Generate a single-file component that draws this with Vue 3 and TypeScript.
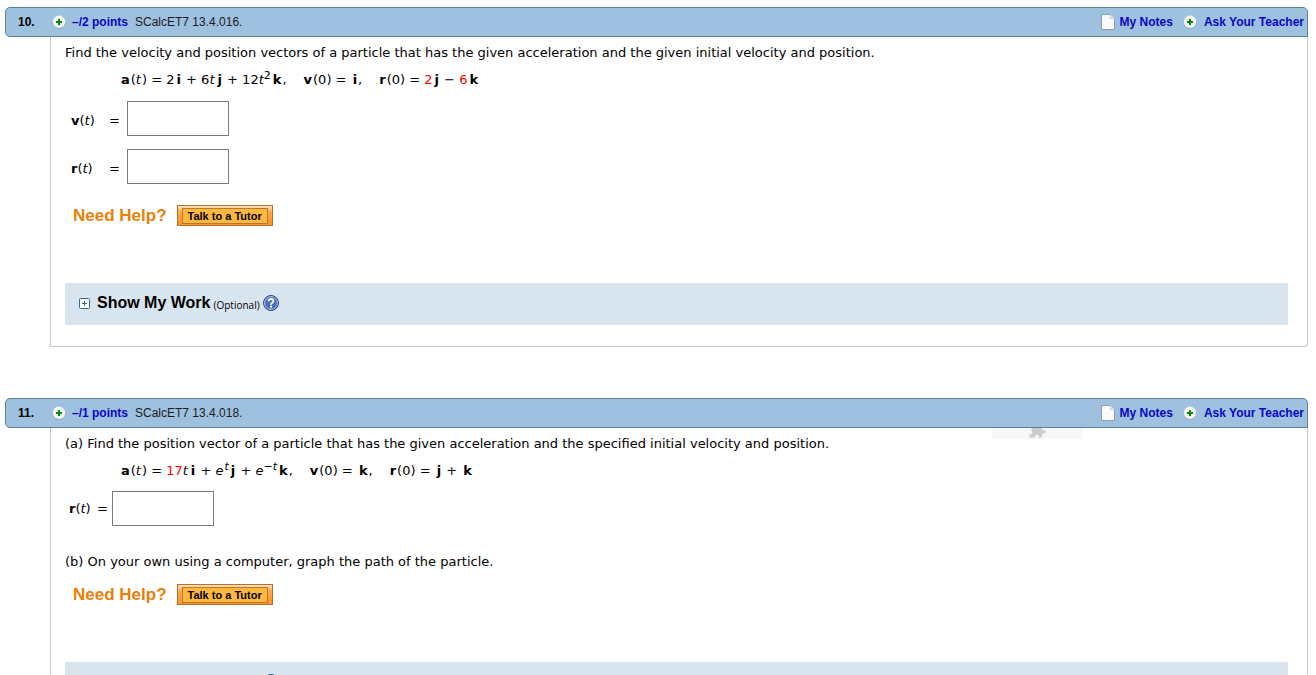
<script setup lang="ts">
import { reactive } from 'vue'

type Kind = 'text' | 'vec' | 'var' | 'num' | 'sup' | 'supvar' | 'gap'
interface Token { s: string; k: Kind }
interface Field { id: string; name: string }
interface Question {
  no: number
  points: string
  source: string
  intro: string
  formula: Token[]
  fields: Field[]
  wide: boolean
  outro?: string
  plugin: boolean
}

const T = (s: string, k: Kind = 'text'): Token => ({ s, k })

const questions: Question[] = [
  {
    no: 10,
    points: '–/2 points',
    source: 'SCalcET7 13.4.016.',
    intro: 'Find the velocity and position vectors of a particle that has the given acceleration and the given initial velocity and position.',
    formula: [
      T('a', 'vec'), T('('), T('t', 'var'), T(') = 2'), T('i', 'vec'), T(' + 6'), T('t', 'var'), T('j', 'vec'),
      T(' + 12'), T('t', 'var'), T('2', 'sup'), T('k', 'vec'), T(','), T('', 'gap'),
      T('v', 'vec'), T('(0) = '), T('i', 'vec'), T(','), T('', 'gap'),
      T('r', 'vec'), T('(0) = '), T('2', 'num'), T('j', 'vec'), T(' − '), T('6', 'num'), T('k', 'vec'),
    ],
    fields: [{ id: 'q10-v', name: 'v' }, { id: 'q10-r', name: 'r' }],
    wide: true,
    plugin: false,
  },
  {
    no: 11,
    points: '–/1 points',
    source: 'SCalcET7 13.4.018.',
    intro: '(a) Find the position vector of a particle that has the given acceleration and the specified initial velocity and position.',
    formula: [
      T('a', 'vec'), T('('), T('t', 'var'), T(') = '), T('17', 'num'), T('t', 'var'), T('i', 'vec'), T(' + '),
      T('e', 'var'), T('t', 'supvar'), T('j', 'vec'), T(' + '), T('e', 'var'), T('−', 'sup'), T('t', 'supvar'), T('k', 'vec'),
      T(','), T('', 'gap'),
      T('v', 'vec'), T('(0) = '), T('k', 'vec'), T(','), T('', 'gap'),
      T('r', 'vec'), T('(0) = '), T('j', 'vec'), T(' + '), T('k', 'vec'),
    ],
    fields: [{ id: 'q11-r', name: 'r' }],
    wide: false,
    outro: '(b) On your own using a computer, graph the path of the particle.',
    plugin: true,
  },
]

const answers = reactive<Record<string, string>>({ 'q10-v': '', 'q10-r': '', 'q11-r': '' })
</script>

<template>
  <main class="page">
    <section v-for="q in questions" :key="q.no" class="question">
      <header class="bar">
        <b class="no">{{ q.no }}.</b>
        <a href="#" class="points">
          <svg class="plus" width="14" height="14" viewBox="0 0 14 14" aria-hidden="true">
            <circle cx="7" cy="7.4" r="6.4" fill="#8aa9c0" />
            <circle cx="7" cy="6.8" r="6.2" fill="#f6f6f3" />
            <path d="M6 4h2v2h2v2H8v2H6V8H4V6h2z" fill="#078a07" />
          </svg>
          <span>{{ q.points }}</span>
        </a>
        <span class="source">{{ q.source }}</span>
        <nav class="links">
          <a href="#" class="notes">
            <svg width="14" height="16" viewBox="0 0 14 16" aria-hidden="true">
              <path d="M.5.5h9l4 4v11H.5z" fill="#fafafa" stroke="#8f9ba6" />
              <path d="M9.5.5v4h4z" fill="#e8eaec" stroke="#c3cbd2" />
            </svg>
            <span>My Notes</span>
          </a>
          <a href="#" class="ask">
            <svg class="plus" width="14" height="14" viewBox="0 0 14 14" aria-hidden="true">
              <circle cx="7" cy="7.4" r="6.4" fill="#8aa9c0" />
              <circle cx="7" cy="6.8" r="6.2" fill="#f6f6f3" />
              <path d="M6 4h2v2h2v2H8v2H6V8H4V6h2z" fill="#078a07" />
            </svg>
            <span>Ask Your Teacher</span>
          </a>
        </nav>
      </header>

      <div class="body">
        <div v-if="q.plugin" class="plugin">
          <svg width="18" height="11" viewBox="0 0 18 11" aria-hidden="true">
            <path d="M4 0h10v2.500c.8-.8 3.500-1 3.500 1.200S15 5.800 14 5v4.500h-3.200c.4-1.800-.4-2.700-1.800-2.700s-2.300 1-1.800 2.700H1.500V6.300C3 6.700 4.300 5.600 4.300 4.300S3.400 2.300 3 2z" fill="#cbcbcb" />
          </svg>
        </div>
        <p class="text">{{ q.intro }}</p>
        <p class="formula"><span v-for="(t, i) in q.formula" :key="i" :class="t.k">{{ t.s }}</span></p>
        <div class="fields" :class="{ wide: q.wide }">
          <div v-for="f in q.fields" :key="f.id" class="field">
            <label :for="f.id"><span class="name"><b>{{ f.name }}</b>(<i>t</i>)</span><span>=</span></label>
            <input :id="f.id" v-model="answers[f.id]" type="text" />
          </div>
        </div>
        <p v-if="q.outro" class="text outro">{{ q.outro }}</p>
        <div class="help" :class="{ near: q.outro }">
          <span class="need">Need Help?</span>
          <button type="button" class="tutor"><span>Talk to a Tutor</span></button>
        </div>
        <div class="work">
          <button type="button" class="toggle">
            <svg width="11" height="11" viewBox="0 0 11 11" aria-hidden="true">
              <rect x=".5" y=".5" width="10" height="10" rx="1" fill="#fff" stroke="#356498" />
              <path d="M3 5.500h5M5.500 3v5" stroke="#356498" />
            </svg>
            <span class="show">Show My Work</span>
            <span class="optional">(Optional)</span>
          </button>
          <button type="button" class="info" aria-label="Help">
            <svg width="16" height="16" viewBox="0 0 16 16" aria-hidden="true">
              <circle cx="8" cy="8" r="7.500" fill="#3159a0" stroke="#294f91" />
              <circle cx="8" cy="8" r="6.400" fill="#4871b5" stroke="#c5d4eb" stroke-width=".9" />
              <path d="M5.500 6.300C5.500 3.300 10.500 3.300 10.500 6.100 10.500 7.900 8 7.800 8 9.700" fill="none" stroke="#fff" stroke-width="1.800" />
              <rect x="7" y="10.700" width="2" height="2" fill="#fff" />
            </svg>
          </button>
        </div>
      </div>
    </section>
  </main>
</template>

<style>
body {
  margin: 0;
  background: #fff;
}
</style>

<style scoped>
.page {
  box-sizing: border-box;
  height: 100vh;
  overflow: hidden;
  padding: 7px 8px 0 5px;
  font-family: Verdana, "DejaVu Sans", sans-serif;
  font-size: 13px;
  color: #000;
}
.question {
  margin-bottom: 51px;
}
.bar {
  box-sizing: border-box;
  height: 30px;
  display: flex;
  align-items: center;
  padding: 0 3px 0 12px;
  border: 1px solid #5f8195;
  border-radius: 5px 5px 0 5px;
  background: #9dc1df;
  font-family: Arial, "Liberation Sans", sans-serif;
  font-size: 12px;
  line-height: 16px;
  white-space: nowrap;
}
.bar a {
  display: flex;
  align-items: center;
  color: #0a06c0;
  font-weight: bold;
  text-decoration: none;
}
.no {
  width: 34px;
}
.points {
  gap: 6px;
}
.source {
  margin-left: 7px;
  color: #1c1c1c;
}
.links {
  display: flex;
  gap: 10px;
  margin-left: auto;
}
.notes {
  gap: 5px;
}
.ask {
  gap: 7px;
}
.body {
  position: relative;
  margin-left: 45px;
  padding: 6px 19px 21px 14px;
  border: 1px solid #c8c8c8;
  border-top: 0;
  border-radius: 0 0 4px 0;
}
.plugin {
  position: absolute;
  top: 0;
  right: 225px;
  width: 90px;
  height: 11px;
  display: flex;
  justify-content: center;
  background: #f7f7f7;
}
.text {
  margin: 0;
  line-height: 20px;
}
.formula {
  margin: 5px 0 0 56px;
  line-height: 24px;
  white-space: pre;
}
.vec {
  margin-right: 1px;
  font-weight: bold;
}
.vec:not(:first-child) {
  margin-left: 2px;
}
.var,
.supvar {
  font-style: italic;
}
.var {
  margin-right: 1px;
}
.var:has(+ .sup) {
  margin-right: 0;
}
.num {
  color: #f00;
}
.sup,
.supvar {
  font-size: 11px;
  line-height: 0;
  vertical-align: 5px;
}
.gap {
  margin-left: 15px;
}
.fields {
  display: grid;
  gap: 13px;
  margin: 8px 0 0 4px;
}
.field {
  display: flex;
  align-items: center;
}
.field label {
  display: flex;
  width: 43px;
  line-height: 20px;
}
.name {
  width: 28px;
}
.wide {
  margin: 9px 0 0 6px;
}
.wide label {
  width: 56px;
  padding-top: 4px;
}
.wide .name {
  width: 38px;
}
.field input {
  box-sizing: border-box;
  width: 102px;
  height: 35px;
  padding: 2px 6px;
  border: 1px solid #7b7b7b;
  background: #fff;
  font: inherit;
}
.outro {
  margin-top: 26px;
}
.help {
  display: flex;
  align-items: center;
  gap: 10px;
  margin: 21px 0 0 8px;
  font-family: Arial, "Liberation Sans", sans-serif;
}
.near {
  margin-top: 12px;
}
.need {
  color: #e98007;
  font-size: 17px;
  font-weight: bold;
  line-height: 21px;
}
.tutor {
  box-sizing: border-box;
  height: 21px;
  padding: 2px 4px;
  border: 1px solid #b8712c;
  background: linear-gradient(#fde0c4, #fba645 35%, #f8962a);
  font-family: inherit;
}
.tutor span {
  display: block;
  padding: 1px 5px 0;
  border: 1px solid #b67a2a;
  background: #ffb83f;
  color: #000;
  font-size: 11px;
  font-weight: bold;
  line-height: 13px;
}
.work {
  box-sizing: border-box;
  height: 42px;
  display: flex;
  align-items: center;
  gap: 3px;
  margin-top: 57px;
  padding: 0 14px 2px;
  background: #d9e5ee;
  font-family: Arial, "Liberation Sans", sans-serif;
}
.work button {
  display: flex;
  align-items: center;
  padding: 0;
  border: 0;
  background: none;
  font-family: inherit;
  color: #000;
}
.show {
  margin: 0 3px 0 7px;
  font-size: 16px;
  font-weight: bold;
}
.optional {
  padding-top: 3px;
  font-family: "Open Sans", "Noto Sans", sans-serif;
  font-size: 10px;
}
</style>
